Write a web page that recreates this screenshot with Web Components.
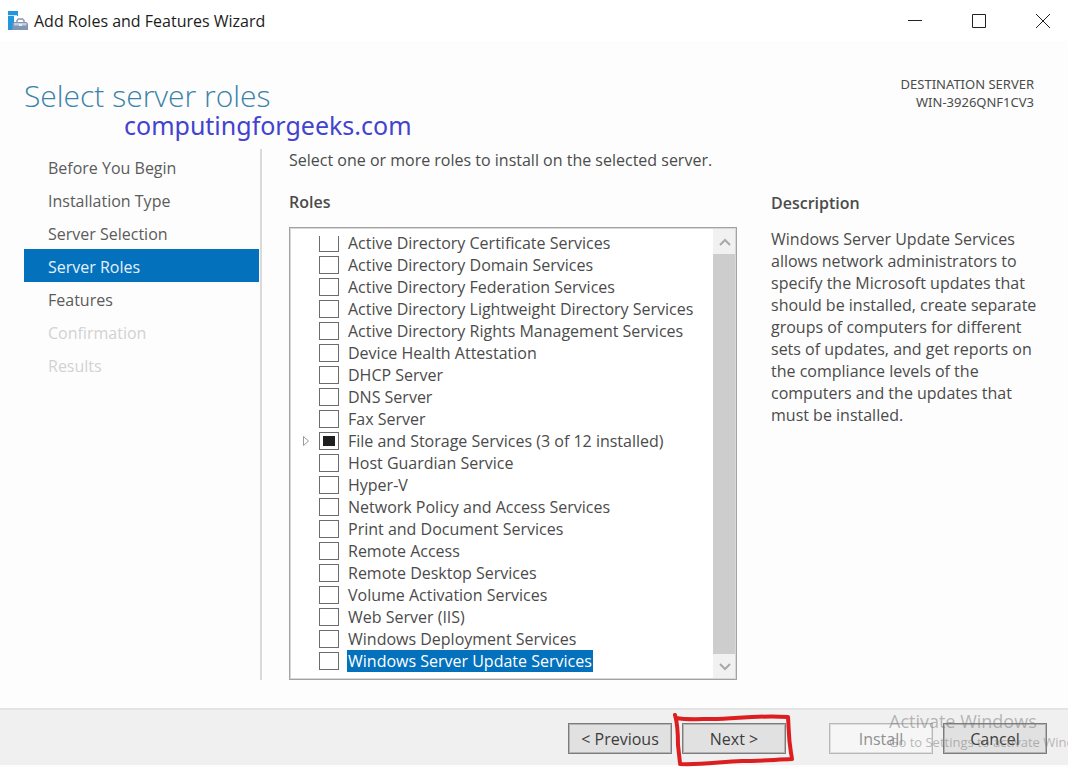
<!DOCTYPE html>
<html lang="en">
<head>
<meta charset="utf-8">
<meta name="viewport" content="width=device-width, initial-scale=1">
<title>Add Roles and Features Wizard</title>
<style>
  html, body { margin: 0; }
  body {
    --accent: #0471bd;
    --ink: #4b4b4b;
    background: #fdfdfd;
    color: var(--ink);
    font: 16px/22px "Open Sans", "Noto Sans", sans-serif;
  }
</style>
</head>
<body>
<wizard-window></wizard-window>

<script>
function define(name, html, setup) {
  const template = document.createElement('template');
  template.innerHTML = html;
  customElements.define(name, class extends HTMLElement {
    constructor() {
      super();
      this.attachShadow({ mode: 'open' }).append(template.content.cloneNode(true));
    }
    connectedCallback() {
      if (setup) setup(this, this.shadowRoot);
    }
  });
}

define('window-bar', `
  <style>
    :host { display: flex; align-items: center; height: 41px; background: #fff; color: #1c1c1c; padding-left: 8px; overflow: hidden; }
    .logo { width: 20px; height: 20px; margin-right: 6px; }
    .title { flex: 1; }
    button { width: 64px; height: 40px; padding: 0; border: 0; background: none; display: grid; place-items: center; }
    button svg { width: 14px; height: 14px; fill: none; stroke: #222; }
    .buttons { display: flex; margin-right: -7px; }
  </style>
  <svg class="logo" viewBox="0 0 20 20" aria-hidden="true">
    <path d="M0 0h10v5H0zM0 5h6v14H0z" fill="#2497dc"/>
    <path d="M0 4.500h9" stroke="#bfe2f5"/>
    <path d="M9 11V9.500L10.500 8h4L16 9.500V11" fill="none" stroke="#8d99ae" stroke-width="1.500"/>
    <path d="M4.500 19V12.500L6 11h12.500L20 12.500V19z" fill="#8395b5"/>
    <path d="M6 12h12.500v2.500H6z" fill="#c3cde0"/>
    <path d="M11 13h3v2h-3z" fill="#e9edf5"/>
  </svg>
  <span class="title"><slot></slot></span>
  <div class="buttons">
    <button aria-label="Minimize"><svg viewBox="0 0 14 14"><path d="M0 6.500h14"/></svg></button>
    <button aria-label="Maximize"><svg viewBox="0 0 14 14"><path d="M.5.5h13v13H.5z"/></svg></button>
    <button aria-label="Close"><svg viewBox="0 0 14 14"><path d="M0 0l14 14M14 0L0 14"/></svg></button>
  </div>
`);

define('wizard-header', `
  <style>
    :host { display: flex; justify-content: space-between; align-items: flex-start; height: 108px; box-sizing: border-box; padding: 34px 34px 0 24px; }
    h1 { margin: 0; font-weight: 300; font-size: 30px; line-height: 42px; color: #3a82a8; }
    .site { margin: -9px 0 0 100px; font: 25px/34px "Noto Sans", sans-serif; color: #4343cf; }
    .server { font: 13px/18px "Noto Sans", sans-serif; text-align: right; }
  </style>
  <div>
    <h1><slot></slot></h1>
    <div class="site">computingforgeeks.com</div>
  </div>
  <div class="server">DESTINATION SERVER<br>WIN-3926QNF1CV3</div>
`);

define('nav-step', `
  <style>
    :host { display: block; }
    a { display: block; padding: 4px 24px 0; line-height: 29px; color: #5b5b5b; text-decoration: none; }
    :host([current]) a { background: var(--accent); color: #e4f1fa; }
    :host([disabled]) a { color: #d2d2d2; }
  </style>
  <a href="#"><slot></slot></a>
`, (host, root) => {
  if (host.hasAttribute('current')) root.querySelector('a').setAttribute('aria-current', 'step');
  if (host.hasAttribute('disabled')) root.querySelector('a').setAttribute('aria-disabled', 'true');
});

define('role-item', `
  <style>
    :host { display: flex; height: 22px; align-items: center; }
    .twisty { width: 29px; height: 12px; visibility: hidden; }
    :host([expandable]) .twisty { visibility: visible; }
    input { appearance: none; box-sizing: border-box; width: 20px; height: 18px; margin: 0; border: 1px solid #6c6c6c; background: #fff; display: grid; place-items: center; }
    input:indeterminate::before { content: ""; width: 12px; height: 10px; background: #1f1f1f; }
    :host([cut]) input { border-top: 0; height: 16px; margin-top: 2px; }
    label { margin-left: 8px; padding: 0 1px; white-space: nowrap; }
    :host([selected]) label { background: var(--accent); color: #fff; }
  </style>
  <svg class="twisty" viewBox="0 0 29 12" aria-hidden="true"><path d="M13.500 1.500v9l5-4.500z" fill="none" stroke="#999"/></svg>
  <input type="checkbox" id="role"><label for="role"><slot></slot></label>
`, (host, root) => {
  root.querySelector('input').indeterminate = host.hasAttribute('partial');
});

define('role-list', `
  <style>
    :host { display: flex; border: 1px solid #a2a2a2; outline: 1px solid #d8d8d8; outline-offset: -2px; background: #fff; }
    .items { flex: 1; min-width: 0; padding: 4px 0 7px; }
    .scroll { display: flex; flex-direction: column; width: 23px; margin: 1px 0 0; background: #cdcdcd; }
    button { height: 25px; padding: 0; border: 0; background: #f1f1f1; display: grid; place-items: center; }
    svg { width: 12px; height: 8px; fill: none; stroke: #a8a8a8; stroke-width: 2; }
    .thumb { flex: 1; }
  </style>
  <div class="items"><slot></slot></div>
  <div class="scroll">
    <button aria-label="Scroll up"><svg viewBox="0 0 12 8"><path d="M1 7l5-5 5 5"/></svg></button>
    <div class="thumb"></div>
    <button aria-label="Scroll down"><svg viewBox="0 0 12 8"><path d="M1 1l5 5 5-5"/></svg></button>
  </div>
`);

define('wizard-button', `
  <style>
    :host { display: block; position: relative; }
    button { width: 104px; height: 31px; padding: 0; border: 1px solid #7c7c7c; outline: 1px solid #b4b4b4; outline-offset: -2px; background: #e1e1e1; color: #3c3c3c; font: inherit; }
    :host([disabled]) button { background: #f6f6f6; border-color: #b8b8b8; outline-color: #dedede; color: #909090; }
  </style>
  <button type="button"><slot></slot></button>
  <slot name="mark"></slot>
`, (host, root) => {
  root.querySelector('button').disabled = host.hasAttribute('disabled');
});

define('ink-mark', `
  <style>
    :host { position: absolute; left: -9px; top: -10px; width: 122px; height: 54px; pointer-events: none; }
    svg { display: block; width: 100%; height: 100%; fill: none; stroke: #dc1e20; stroke-width: 4; stroke-linecap: round; stroke-linejoin: round; }
  </style>
  <svg viewBox="0 0 122 54" aria-hidden="true">
    <path d="M2 2C5 12 5 22 5 32L7 50M3 5C14 7 27 6 39 6C63 6 83 2 115 4C116 16 115 25 119 46C97 47 85 48 69 48C46 49 27 52 7 51"/>
  </svg>
`);

define('activation-note', `
  <style>
    :host { position: absolute; left: 889px; right: 0; top: -1px; overflow: hidden; white-space: nowrap; pointer-events: none; color: rgba(120, 120, 120, .5); }
    .big { font-size: 18px; line-height: 24px; }
    .small { font-size: 13px; line-height: 18px; }
  </style>
  <div class="big">Activate Windows</div>
  <div class="small">Go to Settings to activate Windows.</div>
`);

define('wizard-footer', `
  <style>
    :host { display: flex; justify-content: flex-end; position: relative; box-sizing: border-box; height: 57px; padding: 13px 21px 0 0; border-top: 2px solid #e4e4e4; background: #f0f0f0; margin-bottom: 2px; }
    .pair { display: flex; gap: 10px; margin-left: 43px; }
  </style>
  <div class="pair">
    <wizard-button>&lt; Previous</wizard-button>
    <wizard-button>Next &gt;<ink-mark slot="mark"></ink-mark></wizard-button>
  </div>
  <div class="pair">
    <wizard-button disabled>Install</wizard-button>
    <wizard-button>Cancel</wizard-button>
  </div>
  <activation-note></activation-note>
`);

define('wizard-window', `
  <style>
    :host { display: flex; flex-direction: column; min-height: 100vh; overflow: hidden; }
    main { flex: 1; display: flex; padding: 0 27px 28px 24px; }
    nav { width: 235px; padding: 1px 1px 0 0; border-right: 2px solid #dadada; }
    .roles { flex: 1; margin: 0 34px 0 27px; }
    p { margin: 0; }
    h2 { margin: 0; font-size: 16px; line-height: 22px; font-weight: 600; }
    .roles h2 { margin: 20px 0 14px; }
    aside { width: 270px; padding-top: 43px; }
    aside p { margin-top: 14px; }
  </style>
  <window-bar>Add Roles and Features Wizard</window-bar>
  <wizard-header>Select server roles</wizard-header>
  <main>
    <nav aria-label="Steps">
      <nav-step>Before You Begin</nav-step>
      <nav-step>Installation Type</nav-step>
      <nav-step>Server Selection</nav-step>
      <nav-step current>Server Roles</nav-step>
      <nav-step>Features</nav-step>
      <nav-step disabled>Confirmation</nav-step>
      <nav-step disabled>Results</nav-step>
    </nav>
    <section class="roles">
      <p>Select one or more roles to install on the selected server.</p>
      <h2>Roles</h2>
      <role-list>
        <role-item cut>Active Directory Certificate Services</role-item>
        <role-item>Active Directory Domain Services</role-item>
        <role-item>Active Directory Federation Services</role-item>
        <role-item>Active Directory Lightweight Directory Services</role-item>
        <role-item>Active Directory Rights Management Services</role-item>
        <role-item>Device Health Attestation</role-item>
        <role-item>DHCP Server</role-item>
        <role-item>DNS Server</role-item>
        <role-item>Fax Server</role-item>
        <role-item expandable partial>File and Storage Services (3 of 12 installed)</role-item>
        <role-item>Host Guardian Service</role-item>
        <role-item>Hyper-V</role-item>
        <role-item>Network Policy and Access Services</role-item>
        <role-item>Print and Document Services</role-item>
        <role-item>Remote Access</role-item>
        <role-item>Remote Desktop Services</role-item>
        <role-item>Volume Activation Services</role-item>
        <role-item>Web Server (IIS)</role-item>
        <role-item>Windows Deployment Services</role-item>
        <role-item selected>Windows Server Update Services</role-item>
      </role-list>
    </section>
    <aside>
      <h2>Description</h2>
      <p>Windows Server Update Services allows network administrators to specify the Microsoft updates that should be installed, create separate groups of computers for different sets of updates, and get reports on the compliance levels of the computers and the updates that must be installed.</p>
    </aside>
  </main>
  <wizard-footer></wizard-footer>
`);
</script>
</body>
</html>
